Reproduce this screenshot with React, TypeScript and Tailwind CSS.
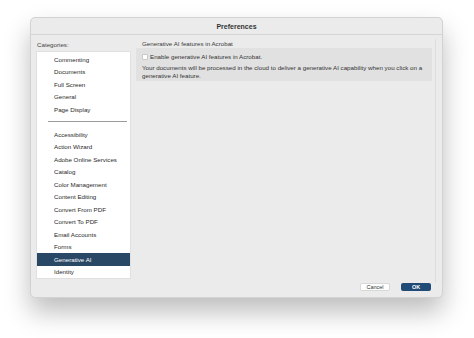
import React from "react"

const groupOne = ["Commenting", "Documents", "Full Screen", "General", "Page Display"]
const groupTwo = [
  "Accessibility",
  "Action Wizard",
  "Adobe Online Services",
  "Catalog",
  "Color Management",
  "Content Editing",
  "Convert From PDF",
  "Convert To PDF",
  "Email Accounts",
  "Forms",
  "Generative AI",
  "Identity",
]

function CategoryItem({ label, active }: { label: string; active?: boolean }) {
  return (
    <div
      className={
        active
          ? "h-[12.5px] flex items-center pl-[17px] bg-[#294866] text-white font-medium"
          : "h-[12.5px] flex items-center pl-[17px] text-[#2a2a2a]"
      }
    >
      {label}
    </div>
  )
}

export default function App() {
  return (
    <div
      className="w-[474px] h-[338px] bg-white overflow-hidden pt-[17px] pl-[30px]"
      style={{ fontFamily: '"Liberation Sans", Arial, sans-serif' }}
    >
      {/* Preferences window */}
      <div className="w-[413px] h-[281px] bg-[#ebebeb] rounded-[5px] border border-[#d2d2d2] shadow-[0_14px_26px_rgba(0,0,0,0.26)] flex flex-col">
        {/* Title bar */}
        <div className="h-[17px] flex items-center justify-center pt-[2px] border-b border-[#d4d4d4] text-[7px] font-bold text-[#333]">
          Preferences
        </div>

        {/* Body */}
        <div className="flex-1 flex pl-[5px] pr-[5px] pt-[4px] text-[6.2px]">
          {/* Categories */}
          <div className="w-[95px] flex flex-col">
            <div className="h-[12px] flex items-center pl-[1px] text-[#444]">Categories:</div>
            <div className="h-[228px] bg-white border border-[#e0e0e0] pt-[1px] flex flex-col">
              {groupOne.map((c) => (
                <CategoryItem key={c} label={c} />
              ))}
              <div className="h-[12.5px] flex items-center pl-[11px] pr-[3px]">
                <div className="h-px w-full bg-[#9c9c9c]" />
              </div>
              {groupTwo.map((c) => (
                <CategoryItem key={c} label={c} active={c === "Generative AI"} />
              ))}
            </div>
          </div>

          {/* Settings panel */}
          <div className="flex-1 ml-[5px] mr-[1px] border-r border-[#dedede] flex flex-col">
            <div className="h-[9px] flex items-center pl-[6px] text-[#3a3a3a]">
              Generative AI features in Acrobat
            </div>
            <div className="mr-[3px] h-[33px] bg-[#e1e1e1] rounded-[1px] pl-[6px] pt-[5px] text-[#333]">
              <div className="flex items-center gap-[2px] h-[7px]">
                <div className="w-[6px] h-[6px] bg-white border border-[#c8c8c8] rounded-[1px]" />
                <span>Enable generative AI features in Acrobat.</span>
              </div>
              <p className="mt-[4px] leading-[8px]">
                Your documents will be processed in the cloud to deliver a generative AI capability when you click on a
                generative AI feature.
              </p>
            </div>
          </div>
        </div>

        {/* Footer buttons */}
        <div className="flex justify-end gap-[11px] pr-[11px] pb-[6px] text-[5.5px]">
          <button className="w-[30px] h-[8px] rounded-[2px] bg-white border border-[#d8d8d8] text-[#333] flex items-center justify-center">
            Cancel
          </button>
          <button className="w-[30px] h-[8px] rounded-[2px] bg-[#1f4b76] text-white font-bold flex items-center justify-center">
            OK
          </button>
        </div>
      </div>
    </div>
  )
}
